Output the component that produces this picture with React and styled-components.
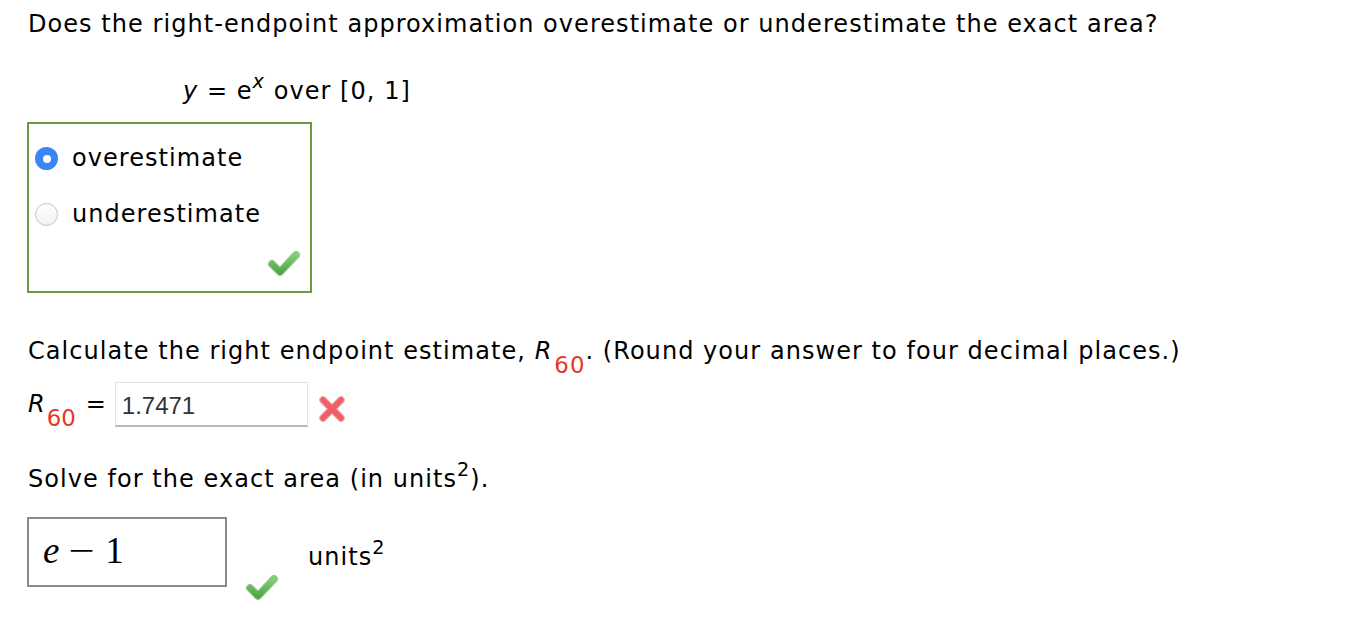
import React from "react";
import styled, { createGlobalStyle } from "styled-components";

const Global = createGlobalStyle`
  html, body { margin: 0; padding: 0; background: #fff; }
  body { font-family: "DejaVu Sans", Verdana, sans-serif; color: #000; }
`;

const Page = styled.div`
  padding: 10px 0 0 28px;
  font-size: 24px;
  line-height: 28px;
  letter-spacing: 1.05px;
`;

const Para = styled.div`
  margin: ${(p) => p.$m || "0"};
  white-space: nowrap;
`;

const Equation = styled.div`
  margin: 39px 0 0 155px;
  white-space: nowrap;
`;

const I = styled.i`
  font-style: italic;
`;

const Sup = styled.sup`
  font-size: 0.8em;
  line-height: 0;
  vertical-align: 0.55em;
`;

const Sub = styled.span`
  color: #e8362a;
  font-size: 0.95em;
  position: relative;
  top: 0.6em;
  margin-left: 2px;
`;

const ChoiceBox = styled.div`
  box-sizing: border-box;
  width: 285px;
  height: 171px;
  margin: 17px 0 0 -1px;
  border: 2px solid #6b9a41;
  padding: 20px 0 0 6px;
  position: relative;
`;

const ChoiceRow = styled.label`
  display: flex;
  align-items: center;
  gap: 14px;
  height: 28px;
  margin-bottom: 28px;
`;

const Radio = styled.span`
  box-sizing: border-box;
  width: 23px;
  height: 23px;
  border-radius: 50%;
  flex: none;
  display: flex;
  align-items: center;
  justify-content: center;
  margin-top: 1px;
  background: ${(p) => (p.$on ? "#3a86f4" : "linear-gradient(#fff, #f1f1f1)")};
  border: ${(p) => (p.$on ? "none" : "1px solid #c4c4c4")};
  &::after {
    content: "";
    display: ${(p) => (p.$on ? "block" : "none")};
    width: 8px;
    height: 8px;
    border-radius: 50%;
    background: #fff;
  }
`;

const BoxCheck = styled.span`
  position: absolute;
  right: 9px;
  bottom: 13px;
  display: flex;
`;

const AnswerRow = styled.div`
  display: flex;
  align-items: flex-start;
  margin-top: ${(p) => p.$mt || "0"};
`;

const RLabel = styled.span`
  white-space: nowrap;
  margin-top: 8px;
  letter-spacing: 0;
`;

const Eq = styled.span`
  margin: 8px 9px 0 10px;
  letter-spacing: 0;
`;

const NumInput = styled.div`
  box-sizing: border-box;
  width: 193px;
  height: 45px;
  border: 1px solid #e2e2e2;
  border-bottom: 2px solid #b8b8b8;
  font-family: "Liberation Sans", Arial, sans-serif;
  font-size: 24px;
  letter-spacing: 0;
  color: #333;
  padding: 10px 0 0 6px;
  line-height: 26px;
`;

const IconWrap = styled.span`
  display: flex;
  margin: ${(p) => p.$m || "0"};
`;

const MathBox = styled.div`
  box-sizing: border-box;
  width: 200px;
  height: 70px;
  margin-left: -1px;
  border: 2px solid #8a8a8a;
  padding: 12px 0 0 14px;
  font-family: "Liberation Serif", "DejaVu Serif", serif;
  font-size: 37px;
  line-height: 40px;
  letter-spacing: 0;
  white-space: nowrap;
`;

const MathVar = styled.i`
  font-style: italic;
`;

const Minus = styled.span`
  margin: 0 13px 0 12px;
  display: inline-block;
  transform: scaleX(1.25);
`;

const Units = styled.span`
  margin: 26px 0 0 29px;
  white-space: nowrap;
`;

const Check = () => (
  <svg width="34" height="29" viewBox="0 0 34 29">
    <defs>
      <linearGradient id="g" x1="0" y1="0" x2="0" y2="1">
        <stop offset="0" stopColor="#7fd06f" />
        <stop offset="1" stopColor="#4fa64a" />
      </linearGradient>
    </defs>
    <path
      d="M5 15 L13 23 L29 6"
      fill="none"
      stroke="#4f9a46"
      strokeWidth="8"
      strokeLinecap="round"
      strokeLinejoin="round"
      opacity="0.55"
    />
    <path
      d="M5 15 L13 23 L29 6"
      fill="none"
      stroke="url(#g)"
      strokeWidth="6"
      strokeLinecap="round"
      strokeLinejoin="round"
    />
  </svg>
);

const Cross = () => (
  <svg width="28" height="28" viewBox="0 0 28 28">
    <path
      d="M5 5 L23 23 M23 5 L5 23"
      fill="none"
      stroke="#d9545a"
      strokeWidth="7.5"
      strokeLinecap="round"
      opacity="0.5"
    />
    <path
      d="M5 5 L23 23 M23 5 L5 23"
      fill="none"
      stroke="#ee6066"
      strokeWidth="5.5"
      strokeLinecap="round"
    />
  </svg>
);

export default function App() {
  return (
    <>
      <Global />
      <Page>
        <Para>
          Does the right-endpoint approximation overestimate or underestimate
          the exact area?
        </Para>
        <Equation>
          <I>y</I> = e<Sup><I>x</I></Sup> over [0, 1]
        </Equation>
        <ChoiceBox>
          <ChoiceRow>
            <Radio $on />
            overestimate
          </ChoiceRow>
          <ChoiceRow>
            <Radio />
            underestimate
          </ChoiceRow>
          <BoxCheck>
            <Check />
          </BoxCheck>
        </ChoiceBox>
        <Para $m="44px 0 0 0">
          Calculate the right endpoint estimate, <I>R</I>
          <Sub>60</Sub>. (Round your answer to four decimal places.)
        </Para>
        <AnswerRow $mt="17px">
          <RLabel>
            <I>R</I>
            <Sub>60</Sub>
          </RLabel>
          <Eq>=</Eq>
          <NumInput>1.7471</NumInput>
          <IconWrap $m="13px 0 0 10px">
            <Cross />
          </IconWrap>
        </AnswerRow>
        <Para $m="38px 0 0 0">
          Solve for the exact area (in units<Sup>2</Sup>).
        </Para>
        <AnswerRow $mt="24px">
          <MathBox>
            <MathVar>e</MathVar>
            <Minus>−</Minus>1
          </MathBox>
          <IconWrap $m="56px 0 0 18px">
            <Check />
          </IconWrap>
          <Units>
            units<Sup>2</Sup>
          </Units>
        </AnswerRow>
      </Page>
    </>
  );
}
